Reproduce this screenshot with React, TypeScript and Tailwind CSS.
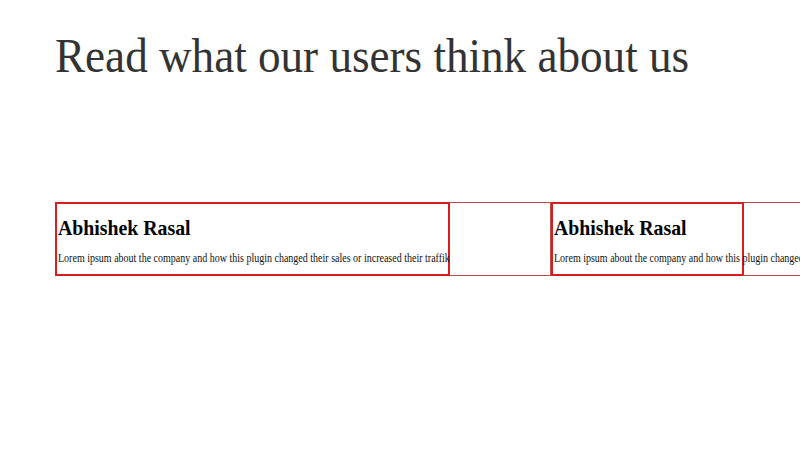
export default function App() {
  const text =
    "Lorem ipsum about the company and how this plugin changed their sales or increased their traffik";
  const Card = ({ inner }: { inner: string }) => (
    <div className="w-[496px] shrink-0 border border-[#b94a4a] h-[74px] flex">
      <div className={`${inner} shrink-0 border-2 border-[#d91c1c] -m-px h-[74px] pl-[1px]`}>
        <h2 className="text-[22px] font-bold text-black leading-[26px] mt-[11px] scale-x-[0.9] origin-left">
          Abhishek Rasal
        </h2>
        <p className="text-[11.5px] text-[#111] leading-[13px] mt-[11px] scale-x-[0.87] origin-left">{text}</p>
      </div>
    </div>
  );
  return (
    <div
      className="w-[800px] h-[450px] overflow-hidden bg-white"
      style={{ fontFamily: '"Liberation Serif", serif' }}
    >
      <div className="pl-[55px] pt-[30px]">
        <h1 className="text-[48px] leading-[52px] text-[#333333] whitespace-nowrap scale-x-[0.94] origin-left">
          Read what our users think about us
        </h1>
      </div>
      <div className="mt-[120px] pl-[55px] flex items-start whitespace-nowrap">
        <Card inner="w-[395px]" />
        <Card inner="w-[193px]" />
      </div>
    </div>
  );
}
